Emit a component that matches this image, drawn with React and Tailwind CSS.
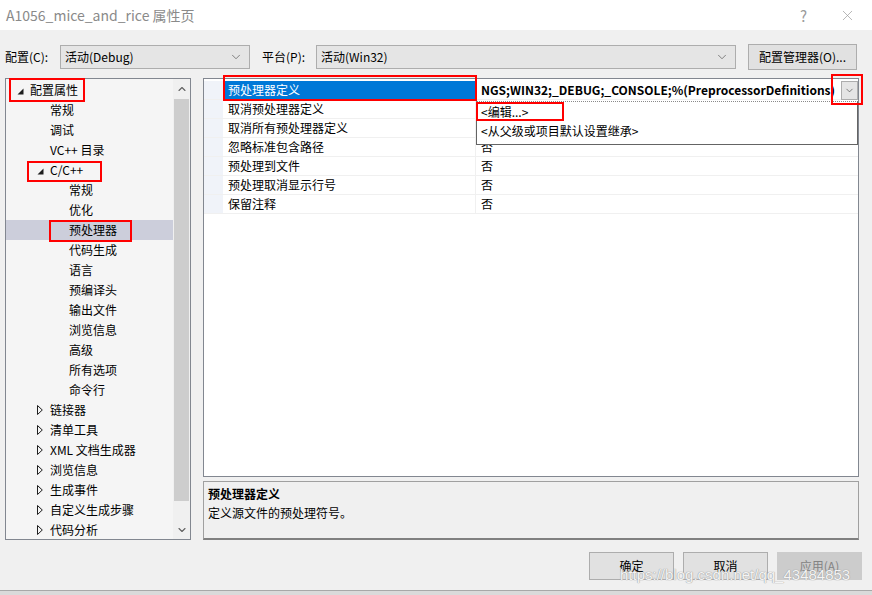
import React from "react";
import { X, ChevronDown, ChevronUp } from "lucide-react";

const tree = [
  { label: "配置属性", level: 0, caret: "open" },
  { label: "常规", level: 1 },
  { label: "调试", level: 1 },
  { label: "VC++ 目录", level: 1 },
  { label: "C/C++", level: 1, caret: "open" },
  { label: "常规", level: 2 },
  { label: "优化", level: 2 },
  { label: "预处理器", level: 2, selected: true },
  { label: "代码生成", level: 2 },
  { label: "语言", level: 2 },
  { label: "预编译头", level: 2 },
  { label: "输出文件", level: 2 },
  { label: "浏览信息", level: 2 },
  { label: "高级", level: 2 },
  { label: "所有选项", level: 2 },
  { label: "命令行", level: 2 },
  { label: "链接器", level: 1, caret: "closed" },
  { label: "清单工具", level: 1, caret: "closed" },
  { label: "XML 文档生成器", level: 1, caret: "closed" },
  { label: "浏览信息", level: 1, caret: "closed" },
  { label: "生成事件", level: 1, caret: "closed" },
  { label: "自定义生成步骤", level: 1, caret: "closed" },
  { label: "代码分析", level: 1, caret: "closed" },
];

const indent = ["pl-[11px]", "pl-[31px]", "pl-[50px]"];

const props = [
  { name: "预处理器定义", value: "NGS;WIN32;_DEBUG;_CONSOLE;%(PreprocessorDefinitions)", active: true },
  { name: "取消预处理器定义", value: "" },
  { name: "取消所有预处理器定义", value: "" },
  { name: "忽略标准包含路径", value: "否" },
  { name: "预处理到文件", value: "否" },
  { name: "预处理取消显示行号", value: "否" },
  { name: "保留注释", value: "否" },
];

function Caret({ type }) {
  if (type === "open") {
    return (
      <svg width="7" height="7" viewBox="0 0 7 7" className="mt-[2px]">
        <polygon points="6.5,0.5 6.5,6.5 0.5,6.5" fill="#1e1e1e" />
      </svg>
    );
  }
  if (type === "closed") {
    return (
      <svg width="6" height="10" viewBox="0 0 6 10">
        <polygon points="0.5,0.5 5.3,5 0.5,9.5" fill="none" stroke="#1e1e1e" strokeWidth="1" />
      </svg>
    );
  }
  return null;
}

function Combo({ text, className }) {
  return (
    <div className={`h-[24px] flex items-center justify-between border border-[#adadad] bg-[#e5e5e5] pl-[4px] pr-[6px] ${className}`}>
      <span>{text}</span>
      <ChevronDown size={14} strokeWidth={1.2} className="text-[#555]" />
    </div>
  );
}

function Btn({ children, disabled }) {
  return (
    <div
      className={`w-[85px] h-[28px] flex items-center justify-center border ${
        disabled ? "border-[#cccccc] bg-[#cccccc] text-[#838383]" : "border-[#adadad] bg-[#e1e1e1] text-black"
      }`}
    >
      {children}
    </div>
  );
}

export default function App() {
  return (
    <div className="relative w-[872px] h-[595px] overflow-hidden bg-[#f0f0f0] text-[12px] leading-none text-black font-['Microsoft_YaHei_UI','Noto_Sans_CJK_SC',sans-serif]">
      {/* title bar */}
      <div className="h-[30px] bg-white flex items-center justify-between">
        <span className="pl-[6px] text-[14px] text-[#8a8a8a]">A1056_mice_and_rice 属性页</span>
        <div className="flex items-center gap-[32px] pr-[16px] text-[#9a9a9a]">
          <span className="text-[15px]">?</span>
          <X size={17} strokeWidth={1} />
        </div>
      </div>

      {/* config row */}
      <div className="flex items-center mt-[14px] pl-[5px]">
        <span className="w-[55px]">配置(C):</span>
        <Combo text="活动(Debug)" className="w-[190px]" />
        <span className="ml-[12px] w-[54px]">平台(P):</span>
        <Combo text="活动(Win32)" className="w-[420px]" />
        <div className="ml-[12px] w-[109px] h-[26px] flex items-center justify-center border border-[#adadad] bg-[#e1e1e1]">
          配置管理器(O)...
        </div>
      </div>

      {/* main */}
      <div className="flex mt-[8px] pl-[5px]">
        {/* tree */}
        <div className="w-[186px] h-[462px] border border-[#828790] bg-[#f5f5f5] flex">
          <div className="flex-1 pt-[1px]">
            {tree.map((t, i) => (
              <div
                key={i}
                className={`h-[20px] flex items-center ${indent[t.level]} ${t.selected ? "bg-[#cccedb]" : ""}`}
              >
                <span className="w-[13px] flex items-center">
                  <Caret type={t.caret} />
                </span>
                <span>{t.label}</span>
              </div>
            ))}
          </div>
          <div className="w-[17px] bg-[#f0f0f0] flex flex-col items-center">
            <div className="h-[20px] flex items-center">
              <ChevronUp size={12} strokeWidth={2.2} className="text-[#606060]" />
            </div>
            <div className="w-[15px] h-[402px] bg-[#cdcdcd]" />
            <div className="flex-1 flex items-end pb-[3px]">
              <ChevronDown size={12} strokeWidth={2.2} className="text-[#606060]" />
            </div>
          </div>
        </div>

        {/* right column */}
        <div className="ml-[12px] w-[656px] flex flex-col">
          <div className="relative h-[399px] border border-[#828790] bg-white pt-[2px]">
            {props.map((p, i) => (
              <div key={i} className="h-[19px] flex border-b border-[#f0f0f0]">
                <div className="w-[19px] bg-[#f0f3f9]" />
                <div
                  className={`w-[252px] flex items-center pl-[5px] ${
                    p.active ? "bg-[#0078d7] text-white" : ""
                  }`}
                >
                  {p.name}
                </div>
                <div className="w-px bg-[#f0f0f0]" />
                <div className="flex-1 min-w-0 flex items-center justify-between pl-[5px]">
                  <span className={`whitespace-nowrap ${p.active ? "font-bold" : ""}`}>{p.value}</span>
                  {p.active && (
                    <div className="shrink-0 w-[17px] h-[19px] flex items-center justify-center bg-[#e5e5e5] border border-[#adadad]">
                      <ChevronDown size={11} strokeWidth={1.4} className="text-[#444]" />
                    </div>
                  )}
                </div>
              </div>
            ))}

            {/* dropdown popup */}
            <div className="absolute left-[272px] top-[22px] w-[382px] h-[44px] bg-white border border-[#646464] border-t-[#8a8a8a] [border-top-style:dotted] pt-[1px]">
              <div className="h-[18px] flex items-center pl-[4px]">&lt;编辑...&gt;</div>
              <div className="h-[19px] flex items-center pl-[4px]">&lt;从父级或项目默认设置继承&gt;</div>
            </div>
          </div>

          <div className="mt-[4px] h-[59px] border border-[#a0a0a0] border-b-[#808080] border-b-2 bg-[#f0f0f0] pl-[4px] pt-[6px]">
            <div className="font-bold">预处理器定义</div>
            <div className="mt-[7px]">定义源文件的预处理符号。</div>
          </div>
        </div>
      </div>

      {/* buttons */}
      <div className="flex justify-end gap-[9px] mt-[12px] pr-[10px]">
        <Btn>确定</Btn>
        <Btn>取消</Btn>
        <Btn disabled>应用(A)</Btn>
      </div>

      {/* bottom strip */}
      <div className="absolute left-0 right-0 bottom-0 h-[5px] bg-[#dadada] border-t border-[#a8a8a8]" />

      {/* watermark */}
      <div className="absolute left-[620px] top-[567px] text-[15px] text-[#f4f4f4] font-['Liberation_Sans',sans-serif] [text-shadow:0_0_1px_#9a9a9a,0_0_1px_#9a9a9a]">
        https://blog.csdn.net/qq_43484853
      </div>

      {/* red annotation boxes */}
      <div className="absolute left-[9px] top-[78px] w-[76px] h-[24px] border-2 border-[#ff0000]" />
      <div className="absolute left-[27px] top-[161px] w-[75px] h-[21px] border-2 border-[#ff0000]" />
      <div className="absolute left-[49px] top-[220px] w-[83px] h-[22px] border-2 border-[#ff0000]" />
      <div className="absolute left-[223px] top-[75px] w-[254px] h-[26px] border-2 border-[#ff0000]" />
      <div className="absolute left-[476px] top-[102px] w-[88px] h-[19px] border-2 border-[#ff0000]" />
      <div className="absolute left-[831px] top-[74px] w-[32px] h-[31px] border-2 border-[#ff0000]" />
    </div>
  );
}
